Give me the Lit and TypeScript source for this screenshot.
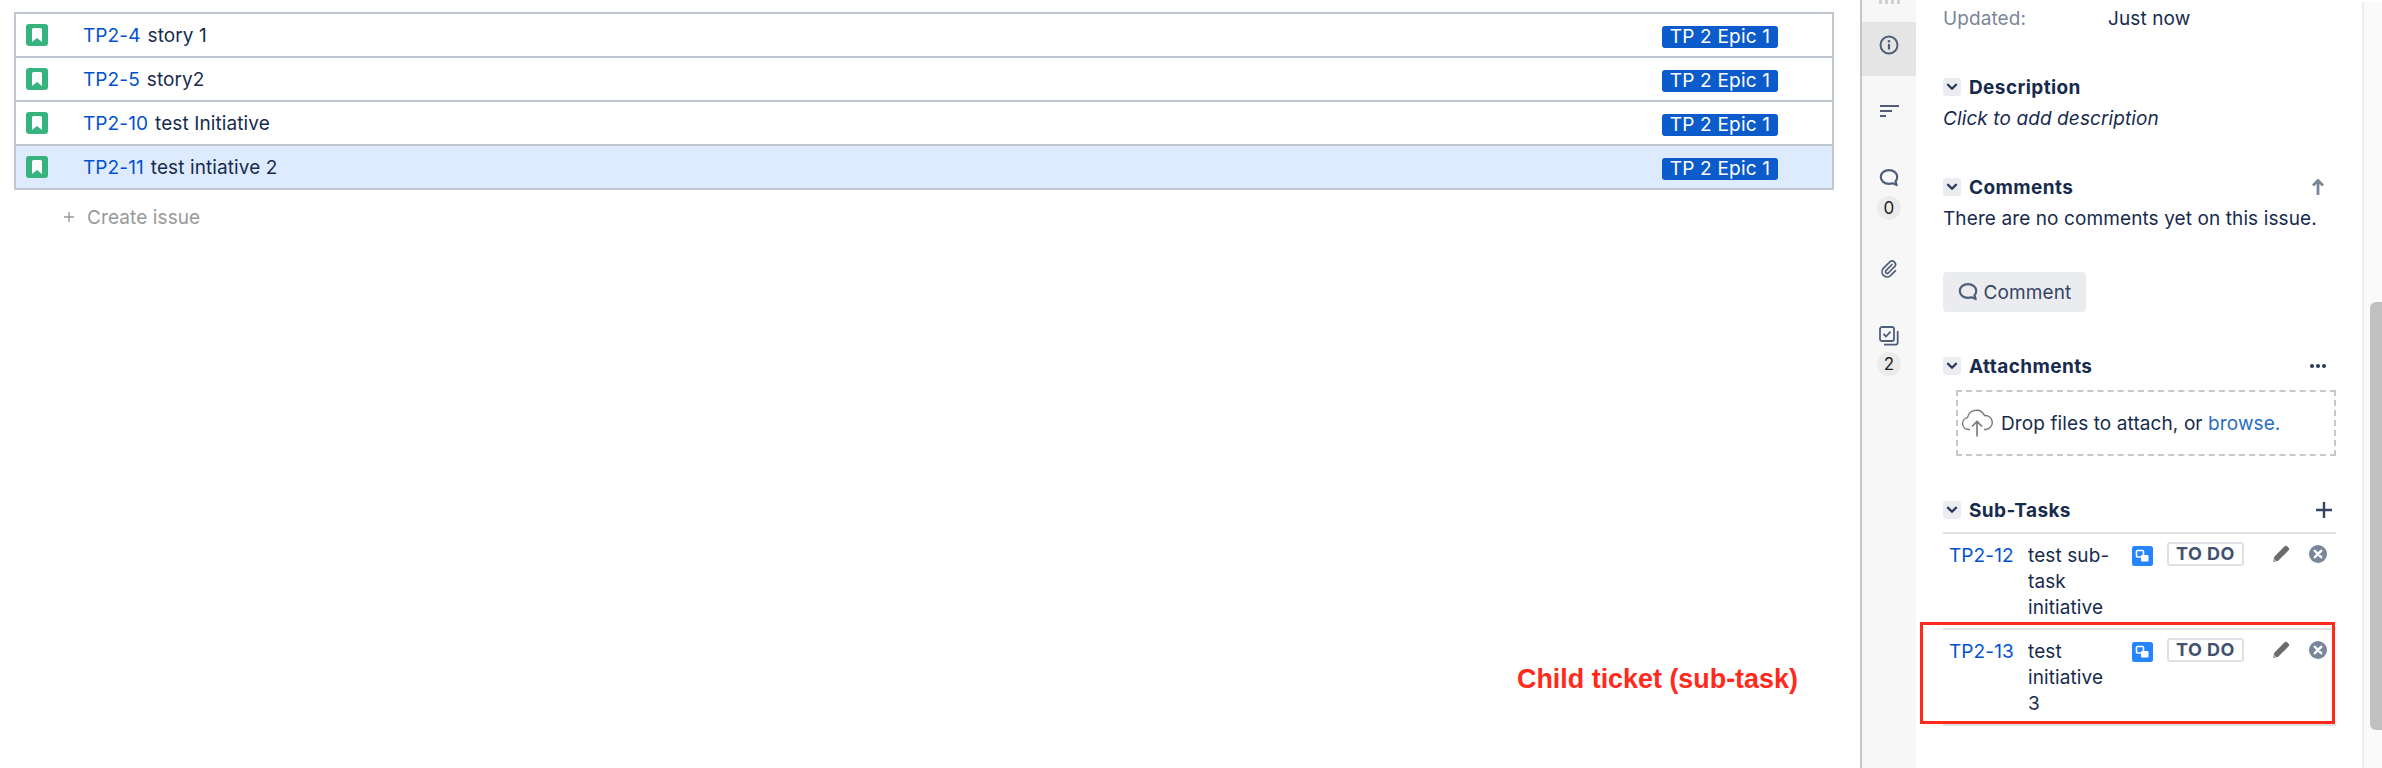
import { LitElement, html, css } from "lit";
import { customElement } from "lit/decorators.js";

const chevron = html`<span class="chev"><svg width="12" height="12" viewBox="0 0 12 12"><path d="M2 3.800 6 7.800l4-4" fill="none" stroke="#253858" stroke-width="2.300" stroke-linecap="round" stroke-linejoin="round"/></svg></span>`;

const story = html`<svg class="story" width="22" height="22" viewBox="0 0 22 22"><rect width="22" height="22" rx="3" fill="#36b37e"/><path d="M6 5.500A1.500 1.500 0 0 1 7.500 4h7A1.500 1.500 0 0 1 16 5.500V18l-5-4-5 4z" fill="#fff"/></svg>`;

const bubble = html`<svg class="bubble" width="20" height="20" viewBox="0 0 20 20"><path d="M10 2.200c4.800 0 8.200 2.900 8.200 6.800 0 1.700-.6 3.200-1.700 4.300l1.200 3.800-4.100-1.800c-1.100.4-2.300.5-3.600.5-4.800 0-8.200-2.900-8.200-6.800S5.200 2.200 10 2.200z" fill="none" stroke="#505f79" stroke-width="2.200" stroke-linejoin="round"/></svg>`;

const subtask = html`<svg width="21" height="20" viewBox="0 0 21 20"><rect width="21" height="20" rx="2.500" fill="#2684ff"/><rect x="4.500" y="4.500" width="7" height="6.500" rx="1" fill="none" stroke="#fff" stroke-width="1.600"/><rect x="9" y="9" width="7.500" height="6.500" rx="1" fill="#fff"/></svg>`;

const pencil = html`<svg width="18" height="18" viewBox="0 0 18 18"><path d="M12.600 1.300a1.800 1.800 0 0 1 2.500 0l1.500 1.500a1.800 1.800 0 0 1 0 2.500L6.200 15.700 1 17l1.300-5.200z" fill="#6b6b6b"/><path d="M1 17l1-3.600 2.600 2.600z" fill="#b5b5b5"/></svg>`;

const closeIcon = html`<svg width="18" height="18" viewBox="0 0 18 18"><circle cx="9" cy="9" r="9" fill="#7a869a"/><path d="M5.800 5.800l6.400 6.400M12.200 5.800l-6.400 6.400" stroke="#fff" stroke-width="2.400" stroke-linecap="round"/></svg>`;

const rows = [
  ["TP2-4", "story 1", false],
  ["TP2-5", "story2", false],
  ["TP2-10", "test Initiative", false],
  ["TP2-11", "test intiative 2", true],
] as const;

const subs = [
  ["TP2-12", "test sub-task initiative"],
  ["TP2-13", "test initiative 3"],
];

@customElement("app-root")
export class AppRoot extends LitElement {
  static styles = css`
    :host {
      display: flex;
      position: relative;
      width: 2382px;
      height: 768px;
      overflow: hidden;
      background: #fff;
      font-family: Inter, "Liberation Sans", sans-serif;
      font-size: 19px;
      letter-spacing: 0.1px;
      color: #172b4d;
    }
    a { color: #0052cc; text-decoration: none; }
    .left { width: 1860px; flex: none; padding: 12px 26px 0 14px; box-sizing: border-box; }
    .table { border: 2px solid #c1c7d0; }
    .row { height: 42px; display: flex; align-items: center; padding: 0 54px 0 10px; }
    .row + .row { border-top: 2px solid #c1c7d0; }
    .row.sel { background: #deebff; }
    .story { flex: none; margin-right: 35px; }
    .summary { margin-left: 7px; flex: 1; }
    .epic { background: #0b5bcb; color: #fff; border-radius: 3px; height: 22px; line-height: 22px; width: 116px; text-align: center; margin-top: 4px; letter-spacing: 0.2px; }
    .create { display: flex; align-items: center; height: 24px; margin: 15px 0 0 50px; color: #999; }
    .create svg { margin-right: 13px; }
    .rail { width: 56px; box-sizing: border-box; flex: none; background: #f7f7f7; border-left: 2px solid #c1c7d0; display: flex; flex-direction: column; align-items: center; }
    .tick { height: 22px; width: 100%; display: flex; justify-content: center; gap: 3px; }
    .tick i { width: 3px; height: 4px; background: #d0d0d0; }
    .tab { width: 100%; height: 54px; box-sizing: border-box; padding-top: 13px; background: #e5e5e5; display: flex; align-items: flex-start; justify-content: center; }
    .sort { margin-top: 29px; height: 12px; display: flex; }
    .cm { margin-top: 51px; display: flex; flex-direction: column; align-items: center; }
    .cm .badge { margin-top: 8px; }
    .badge { width: 24px; height: 24px; border-radius: 50%; background: #ebebeb; color: #222; font-size: 17px; line-height: 24px; text-align: center; margin-top: 6px; }
    .clip { margin-top: 38px; height: 20px; display: flex; }
    .chk { margin-top: 48px; display: flex; flex-direction: column; align-items: center; }
    .panel { width: 446px; flex: none; box-sizing: border-box; padding: 8px 26px 0 27px; }
    .kv { display: flex; height: 22px; line-height: 22px; }
    .kv span:first-child { width: 165px; color: #7a869a; }
    .head { display: flex; align-items: center; height: 20px; }
    .chev { width: 18px; height: 18px; border-radius: 3px; background: #ebecf0; display: flex; align-items: center; justify-content: center; margin-right: 8px; flex: none; }
    .title { flex: 1; font-weight: 700; font-size: 19px; letter-spacing: 0.4px; color: #172b4d; }
    .h-desc { margin-top: 47px; }
    .h-comm { margin-top: 46px; }
    .h-att { margin-top: 44px; }
    .h-sub { margin-top: 44px; }
    .arrow { margin-right: 11px; }
    .dots { margin-right: 9px; }
    .plus { margin-right: 4px; }
    .t { line-height: 24px; margin-top: 10px; }
    .i { font-style: italic; }
    .btn { width: 143px; height: 40px; margin-top: 41px; background: #ebecf0; border-radius: 4px; display: flex; align-items: center; justify-content: center; gap: 6px; color: #344563; }
    .drop { margin: 14px 0 0 13px; height: 66px; width: 380px; box-sizing: border-box; border: 2px dashed #c8c8c8; display: flex; align-items: center; padding-left: 3px; gap: 8px; }
    .drop a { color: #2a6ebb; }
    .sublist { margin-top: 12px; border-top: 2px solid #dfe1e6; }
    .sub { display: flex; height: 94px; border-bottom: 2px solid #dfe1e6; align-items: flex-start; }
    .sub .key { width: 79px; margin-left: 6px; line-height: 26px; padding-top: 9px; flex: none; }
    .sub .name { width: 90px; line-height: 26px; padding-top: 9px; flex: none; }
    .sub .ty { margin: 12px 0 0 14px; flex: none; height: 20px; }
    .loz { margin: 8px 0 0 14px; width: 77px; height: 24px; box-sizing: border-box; border: 2px solid #dfe1e6; border-radius: 3px; font-weight: 700; font-size: 18px; letter-spacing: 0.5px; line-height: 20px; text-align: center; color: #42526e; flex: none; }
    .pen { margin: 11px 0 0 28px; height: 18px; flex: none; }
    .cl { margin: 11px 0 0 19px; height: 18px; flex: none; }
    .scroll { flex: 1; margin-top: 2px; border-left: 2px solid #eee; background: #fafafa; position: relative; }
    .thumb { position: absolute; left: 6px; right: 0; top: 300px; height: 428px; background: #c1c1c1; border-radius: 6px 0 0 6px; }
    .redbox { position: absolute; left: 1920px; top: 622px; width: 415px; height: 102px; box-sizing: border-box; border: 3px solid #ff2a1c; }
    .redlabel { position: absolute; left: 1517px; top: 665px; font-family: "Liberation Sans", sans-serif; font-weight: 700; font-size: 26.900px; line-height: 28px; letter-spacing: 0; color: #ff2a1c; white-space: nowrap; }
  `;

  render() {
    return html`
      <div class="left">
        <div class="table">
          ${rows.map(([k, s, sel]) => html`
            <div class="row ${sel ? "sel" : ""}">
              ${story}<a href="#">${k}</a><span class="summary">${s}</span>
              <span class="epic">TP 2 Epic 1</span>
            </div>`)}
        </div>
        <div class="create">
          <svg width="10" height="10" viewBox="0 0 10 10"><path d="M5 0v10M0 5h10" stroke="#999" stroke-width="1.400"/></svg>
          Create issue
        </div>
      </div>
      <div class="rail">
        <div class="tick"><i></i><i></i><i></i><i></i></div>
        <div class="tab">
          <svg width="20" height="20" viewBox="0 0 20 20"><circle cx="10" cy="10" r="8.500" fill="none" stroke="#505f79" stroke-width="2"/><circle cx="10" cy="6.200" r="1.300" fill="#505f79"/><rect x="8.900" y="8.800" width="2.200" height="6" rx="1" fill="#505f79"/></svg>
        </div>
        <div class="sort">
          <svg width="19" height="12" viewBox="0 0 19 12"><path d="M0 1h19M0 6h12M0 11h6" stroke="#505f79" stroke-width="2"/></svg>
        </div>
        <div class="cm">${bubble}<div class="badge">0</div></div>
        <div class="clip">
          <svg width="20" height="20" viewBox="0 0 20 20"><path d="M13 6.500 6.900 12.600a1.700 1.700 0 0 0 2.400 2.400l6.300-6.300a3.400 3.400 0 0 0-4.800-4.800L4.300 10.400a5.100 5.100 0 0 0 7.200 7.200l5-5" fill="none" stroke="#505f79" stroke-width="1.700" stroke-linecap="round"/></svg>
        </div>
        <div class="chk">
          <svg width="20" height="20" viewBox="0 0 20 20"><rect x="1" y="1" width="14" height="14" rx="2" fill="none" stroke="#505f79" stroke-width="1.800"/><path d="M4.500 8l2.500 2.500 4.500-4.800" fill="none" stroke="#505f79" stroke-width="1.800"/><path d="M18.700 5v11.500a2.200 2.200 0 0 1-2.200 2.200H5" fill="none" stroke="#505f79" stroke-width="1.800"/></svg>
          <div class="badge">2</div>
        </div>
      </div>
      <div class="panel">
        <div class="kv"><span>Updated:</span><span>Just now</span></div>
        <div class="head h-desc">${chevron}<span class="title">Description</span></div>
        <div class="t i">Click to add description</div>
        <div class="head h-comm">${chevron}<span class="title">Comments</span>
          <svg class="arrow" width="14" height="18" viewBox="0 0 14 18"><path d="M7 17V2.500M2 7.500 7 2.500l5 5" fill="none" stroke="#7a869a" stroke-width="2.800"/></svg>
        </div>
        <div class="t">There are no comments yet on this issue.</div>
        <div class="btn">${bubble}<span>Comment</span></div>
        <div class="head h-att">${chevron}<span class="title">Attachments</span>
          <svg class="dots" width="18" height="6" viewBox="0 0 18 6"><circle cx="3" cy="3" r="2" fill="#253858"/><circle cx="9" cy="3" r="2" fill="#253858"/><circle cx="15" cy="3" r="2" fill="#253858"/></svg>
        </div>
        <div class="drop">
          <svg width="32" height="28" viewBox="0 0 32 28"><path d="M9 20.500H7.500a6 6 0 0 1-1-11.900A9 9 0 0 1 23.500 6.500a7 7 0 0 1 1.500 14h-2" fill="none" stroke="#777" stroke-width="1.400"/><path d="M16 27.500V13M11 17.500l5-5 5 5" fill="none" stroke="#777" stroke-width="1.600"/></svg>
          <span>Drop files to attach, or <a href="#">browse.</a></span>
        </div>
        <div class="head h-sub">${chevron}<span class="title">Sub-Tasks</span>
          <svg class="plus" width="16" height="16" viewBox="0 0 16 16"><path d="M8 0v16M0 8h16" stroke="#344563" stroke-width="2.400"/></svg>
        </div>
        <div class="sublist">
          ${subs.map(([k, n]) => html`
            <div class="sub">
              <a class="key" href="#">${k}</a>
              <div class="name">${n}</div>
              <div class="ty">${subtask}</div>
              <div class="loz">TO DO</div>
              <div class="pen">${pencil}</div>
              <div class="cl">${closeIcon}</div>
            </div>`)}
        </div>
      </div>
      <div class="scroll"><div class="thumb"></div></div>
      <div class="redbox"></div>
      <div class="redlabel">Child ticket (sub-task)</div>
    `;
  }
}
